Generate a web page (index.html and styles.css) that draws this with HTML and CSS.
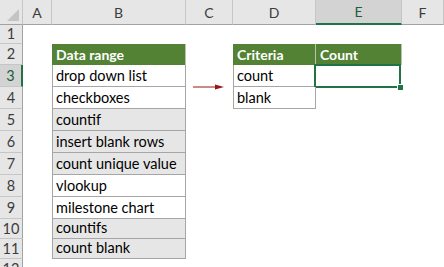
FILE: index.html
```html
<!DOCTYPE html>
<html>
<head>
<meta charset="utf-8">
<link rel="stylesheet" href="styles.css">
</head>
<body>
<div class="sheet">
  <div class="c corner"><svg width="12" height="12" viewBox="0 0 12 12"><polygon points="12,0 12,12 0,12" fill="#c4c4c4"/></svg></div>
  <div class="c ch">A</div>
  <div class="c ch">B</div>
  <div class="c ch">C</div>
  <div class="c ch">D</div>
  <div class="c ch sel">E</div>
  <div class="c ch">F</div>

  <div class="c rh">1</div><div class="c"></div><div class="c"></div><div class="c"></div><div class="c"></div><div class="c"></div><div class="c"></div>

  <div class="c rh">2</div><div class="c"></div><div class="c hd">Data range</div><div class="c"></div><div class="c hd">Criteria</div><div class="c hd">Count</div><div class="c"></div>

  <div class="c rh sel">3</div><div class="c"></div><div class="c dw">drop down list</div><div class="c"></div><div class="c dw">count</div><div class="c active"><div class="selbox"><div class="handle"></div></div></div><div class="c"></div>

  <div class="c rh">4</div><div class="c"></div><div class="c dw">checkboxes</div><div class="c"></div><div class="c dw">blank</div><div class="c"></div><div class="c"></div>

  <div class="c rh">5</div><div class="c"></div><div class="c dg">countif</div><div class="c"></div><div class="c"></div><div class="c"></div><div class="c"></div>

  <div class="c rh">6</div><div class="c"></div><div class="c dg">insert blank rows</div><div class="c"></div><div class="c"></div><div class="c"></div><div class="c"></div>

  <div class="c rh">7</div><div class="c"></div><div class="c dg">count unique value</div><div class="c"></div><div class="c"></div><div class="c"></div><div class="c"></div>

  <div class="c rh">8</div><div class="c"></div><div class="c dw">vlookup</div><div class="c"></div><div class="c"></div><div class="c"></div><div class="c"></div>

  <div class="c rh">9</div><div class="c"></div><div class="c dw">milestone chart</div><div class="c"></div><div class="c"></div><div class="c"></div><div class="c"></div>

  <div class="c rh">10</div><div class="c"></div><div class="c dg">countifs</div><div class="c"></div><div class="c"></div><div class="c"></div><div class="c"></div>

  <div class="c rh">11</div><div class="c"></div><div class="c dg">count blank</div><div class="c"></div><div class="c"></div><div class="c"></div><div class="c"></div>

  <div class="c rh">12</div><div class="c"></div><div class="c"></div><div class="c"></div><div class="c"></div><div class="c"></div><div class="c"></div>

  <svg class="arrow" width="36" height="10" viewBox="0 0 36 10"><line x1="3" y1="5" x2="28" y2="5" stroke="#9b1414" stroke-width="1"/><polygon points="25,2.5 34,5 25,7.5" fill="#9b1414"/></svg>
</div>
</body>
</html>
```
FILE: styles.css
```css
html, body {
  margin: 0;
  padding: 0;
  background: #ffffff;
  overflow: hidden;
}
.sheet {
  position: relative;
  display: grid;
  grid-template-columns: 23px 29px 134px 47px 83px 86px 42px;
  grid-template-rows: 25px 19px 21px repeat(7, 22px) 20px 20px 20px;
  font-family: Lato, "Liberation Sans", sans-serif;
  font-size: 14.5px;
  color: #000;
}
.c {
  box-sizing: border-box;
  display: flex;
  align-items: flex-end;
  padding: 0 2px 1px 3px;
  line-height: 18px;
  white-space: nowrap;
  position: relative;
}
.corner {
  background: #e6e6e6;
  border-right: 1px solid #c6c6c6;
  border-bottom: 1px solid #a2a2a2;
  justify-content: flex-end;
  padding: 0 3px 3px 0;
}
.ch {
  background: #e6e6e6;
  border-right: 1px solid #c6c6c6;
  border-bottom: 1px solid #a2a2a2;
  justify-content: center;
  align-items: center;
  padding: 1px 0 0 0;
  color: #3c3c3c;
  font-size: 14px;
}
.ch.sel {
  background: #d3d3d3;
  border-bottom: 2px solid #217346;
  color: #1d5e3b;
}
.rh {
  background: #e6e6e6;
  border-right: 1px solid #a2a2a2;
  border-bottom: 1px solid #c6c6c6;
  justify-content: center;
  align-items: center;
  padding: 0;
  color: #3c3c3c;
  font-size: 14.5px;
}
.rh.sel {
  background: #d3d3d3;
  border-right: 2px solid #217346;
  color: #1d5e3b;
}
.hd {
  background: #548235;
  color: #ffffff;
  font-weight: bold;
  font-size: 14px;
  border-left: 1px solid #548235;
  border-right: 1px solid #b7c4ad;
}
.dw, .dg {
  border-left: 1px solid #a6a6a6;
  border-right: 1px solid #a6a6a6;
  border-bottom: 1px solid #a6a6a6;
}
.dw {
  background: #ffffff;
}
.dg {
  background: #e7e6e6;
}
.selbox {
  position: absolute;
  left: -2px;
  top: -1px;
  width: 87px;
  height: 24px;
  box-sizing: border-box;
  border: 2px solid #217346;
}
.handle {
  position: absolute;
  right: -4px;
  bottom: -4px;
  width: 6px;
  height: 6px;
  box-sizing: border-box;
  background: #217346;
  border-left: 1px solid #fff;
  border-top: 1px solid #fff;
}
.arrow {
  position: absolute;
  left: 190px;
  top: 82px;
}
```
